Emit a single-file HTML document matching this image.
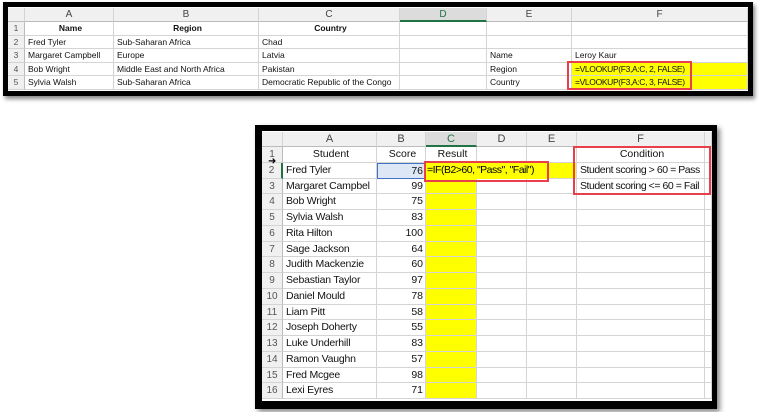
<!DOCTYPE html><html><head><style>
body{margin:0;width:768px;height:412px;background:#fff;position:relative;overflow:hidden;font-family:"Liberation Sans",sans-serif;}
.a{position:absolute;box-sizing:border-box;white-space:nowrap;overflow:hidden}
.hd{background:#f0f0f0;color:#444;text-align:center;border-right:1px solid #d4d4d4;border-bottom:1px solid #bbb}
.rn{background:#f0f0f0;color:#555;text-align:center;border-bottom:1px solid #d4d4d4;border-right:1px solid #bbb}
.c{border-right:1px solid #d4d4d4;border-bottom:1px solid #d4d4d4;color:#111;padding-left:3px}
</style></head><body>
<div class="a" style="left:3px;top:2px;width:750px;height:94px;background:#000;box-shadow:2px 3px 4px #888"></div>
<div class="a" style="left:8px;top:7px;width:740px;height:84px;background:#fff"></div>
<div class="a" style="left:255px;top:125px;width:462px;height:284px;background:#000;box-shadow:3px 3px 5px #888"></div>
<div class="a" style="left:262px;top:131px;width:450px;height:270px;background:#fff"></div>
<script>
function add(h){document.body.insertAdjacentHTML('beforeend',h)}
var cx=[8,25,114,259,400,487,572,748],hx=8,hy=22,rh=13.6,fs=8.5;
var heads=['','A','B','C','D','E','F'];
for(var i=0;i<7;i++)add(`<div class="a hd" style="left:${cx[i]}px;top:${hx}px;width:${cx[i+1]-cx[i]}px;height:${hy-hx}px;font-size:10px;line-height:${hy-hx}px;${i==4?'background:#dcdcdc;border-bottom:2px solid #217346;color:#217346':''}">${heads[i]}</div>`);
var d=[['<b>Name</b>','<b>Region</b>','<b>Country</b>','','',''],['Fred Tyler','Sub-Saharan Africa','Chad','','',''],['Margaret Campbell','Europe','Latvia','','Name','Leroy Kaur'],['Bob Wright','Middle East and North Africa','Pakistan','','Region','=VLOOKUP(F3,A:C, 2, FALSE)'],['Sylvia Walsh','Sub-Saharan Africa','Democratic Republic of the Congo','','Country','=VLOOKUP(F3,A:C, 3, FALSE)']];
for(var r=0;r<5;r++){var y=hy+r*rh;
add(`<div class="a rn" style="left:8px;top:${y}px;width:17px;height:${rh}px;font-size:${fs}px;line-height:${rh}px">${r+1}</div>`);
for(var c=0;c<6;c++){var bg=(c==5&&r>=3)?'background:#ffff00;':'';var al=r==0?'text-align:center;':'';var ls=(c==5&&r>=3)?'letter-spacing:-0.35px;':'';
add(`<div class="a c" style="left:${cx[c+1]}px;top:${y}px;width:${cx[c+2]-cx[c+1]}px;height:${rh}px;font-size:${fs}px;line-height:${rh}px;${bg}${al}${ls}">${d[r][c]}</div>`);}}
add(`<div class="a" style="left:567px;top:61px;width:125px;height:29px;border:2px solid #e8404a"></div>`);
var bx=[262,283,377,426,477,527,577,705,712],by0=132,bh0=147,rh2=15.75,f2=10.5;
var h2=['','A','B','C','D','E','F',''];
for(var i=0;i<8;i++)add(`<div class="a hd" style="left:${bx[i]}px;top:${by0}px;width:${bx[i+1]-bx[i]}px;height:${bh0-by0}px;font-size:11px;line-height:14px;${i==3?'background:#dcdcdc;border-bottom:2px solid #217346;color:#217346':''}">${h2[i]}</div>`);
var st=[['Student','Score','Result'],['Fred Tyler','76',''],['Margaret Campbel','99'],['Bob Wright','75'],['Sylvia Walsh','83'],['Rita Hilton','100'],['Sage Jackson','64'],['Judith Mackenzie','60'],['Sebastian Taylor','97'],['Daniel Mould','78'],['Liam Pitt','58'],['Joseph Doherty','55'],['Luke Underhill','83'],['Ramon Vaughn','57'],['Fred Mcgee','98'],['Lexi Eyres','71']];
for(var r=0;r<16;r++){var y=bh0+r*rh2;
add(`<div class="a rn" style="left:262px;top:${y}px;width:21px;height:${rh2}px;font-size:10px;line-height:${rh2}px;${r==1?'border-right:2px solid #217346':''}">${r+1}</div>`);
for(var c=0;c<7;c++){var t='',s='';
if(c==0)t=st[r][0],s=r==0?'text-align:center;':'letter-spacing:-0.2px;';
if(c==1){t=st[r][1];s=r==0?'text-align:center;':'text-align:right;padding-right:2px;';if(r==1)s+='background:#dde7f5;border:1px solid #4472c4;';}
if(c==2){if(r==0){t='Result';s='text-align:center;'}else s='background:#ffff00;';}
if((c==3||c==4)&&r==1)s='background:#ffff00;';
if(c==5){s='letter-spacing:-0.45px;';if(r==0){t='Condition';s='text-align:center;'}if(r==1)t='Student scoring &gt; 60 = Pass';if(r==2)t='Student scoring &lt;= 60 = Fail';}
add(`<div class="a c" style="left:${bx[c+1]}px;top:${y}px;width:${bx[c+2]-bx[c+1]}px;height:${rh2}px;font-size:${f2}px;line-height:${rh2}px;${s}">${t}</div>`);}}
add(`<div class="a" style="left:426px;top:${bh0+rh2}px;width:121px;height:${rh2}px;background:#ffff00;font-size:10.5px;letter-spacing:-0.5px;line-height:${rh2}px;padding-left:1px">=IF(B2&gt;60, "Pass", "Fail")</div>`);
add(`<div class="a" style="left:424px;top:161px;width:125px;height:21px;border:2px solid #e8404a"></div>`);
add(`<div class="a" style="left:573px;top:146px;width:138px;height:49px;border:2px solid #e8404a"></div>`);
add(`<div class="a" style="left:268px;top:158px;font-size:10px;line-height:8px">&#10140;</div>`);
</script>
</body></html>
